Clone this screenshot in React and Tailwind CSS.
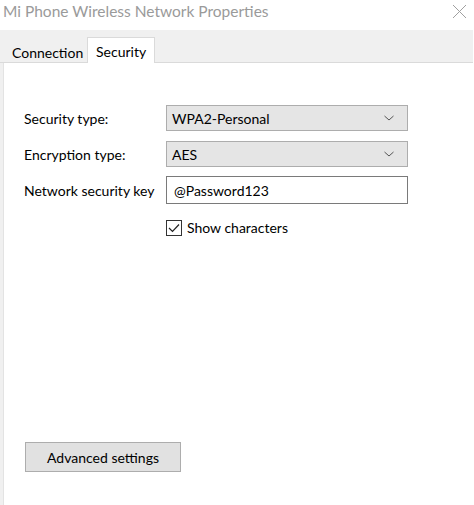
import { useState } from 'react'

const font = { fontFamily: 'Lato, "Noto Sans", sans-serif' }

function Chevron() {
  return (
    <svg width="12" height="8" viewBox="0 0 12 8" className="shrink-0">
      <path d="M1.5 2 L6 6 L10.5 2" fill="none" stroke="#555" strokeWidth="1" />
    </svg>
  )
}

function Select({ value }) {
  return (
    <div className="flex items-center justify-between h-[26px] w-[242px] bg-[#e5e5e5] border border-[#adadad] pl-[5px] pr-[12px] text-[14px] text-black">
      <span>{value}</span>
      <Chevron />
    </div>
  )
}

export default function App() {
  const [show, setShow] = useState(true)

  return (
    <div className="w-[474px] h-[505px] bg-white flex flex-col text-black overflow-hidden" style={font}>
      {/* title bar */}
      <div className="h-[30px] flex items-start justify-between pl-[3px] pr-[5px]">
        <span className="text-[15.5px] text-[#9a9a9a] leading-[22px] whitespace-nowrap">Mi Phone Wireless Network Properties</span>
        <svg width="15" height="15" viewBox="0 0 15 15" className="mt-[4px] mr-[2px]">
          <path d="M1 1 L14 14 M14 1 L1 14" stroke="#a0a0a0" strokeWidth="1" />
        </svg>
      </div>

      {/* tab strip */}
      <div className="h-[33px] bg-[#f0f0f0] flex items-end pl-[3px] border-b border-[#dadada] mr-[1px]">
        <div className="h-[23px] w-[84px] flex items-end pl-[9px] text-[14px] leading-[18px] whitespace-nowrap">Connection</div>
        <div className="h-[26px] w-[68px] -mb-px bg-white border border-b-0 border-[#dadada] flex items-start pt-[5px] pl-[8px] text-[14px] leading-[18px] whitespace-nowrap">
          Security
        </div>
      </div>

      {/* panel */}
      <div className="flex-1 flex border-l-[3px] border-[#f0f0f0]">
        <div className="flex-1 flex flex-col pt-[42px] pl-[20px] border-l border-[#e3e3e3]">
          <div className="grid grid-cols-[142px_242px] gap-y-[10px] items-center text-[14px] whitespace-nowrap">
            <span>Security type:</span>
            <Select value="WPA2-Personal" />
            <span>Encryption type:</span>
            <Select value="AES" />
            <span>Network security key</span>
            <div className="h-[28px] w-[242px] border border-[#7a7a7a] bg-white flex items-center pl-[7px] -mt-px">
              @Password123
            </div>
          </div>

          <label className="mt-[15px] ml-[142px] flex items-center gap-[5px] text-[14px] leading-[18px] cursor-default">
            <span
              onClick={() => setShow(!show)}
              className="w-[16px] h-[16px] border border-[#333] bg-white flex items-center justify-center"
            >
              {show && (
                <svg width="12" height="10" viewBox="0 0 12 10">
                  <path d="M1 5 L4.5 8.5 L11 1.5" fill="none" stroke="#222" strokeWidth="1.2" />
                </svg>
              )}
            </span>
            Show characters
          </label>

          <div className="flex-1" />

          <button className="mb-[33px] ml-[1px] w-[156px] h-[30px] bg-[#e1e1e1] border border-[#adadad] text-[14px] text-black">
            Advanced settings
          </button>
        </div>
      </div>
    </div>
  )
}
